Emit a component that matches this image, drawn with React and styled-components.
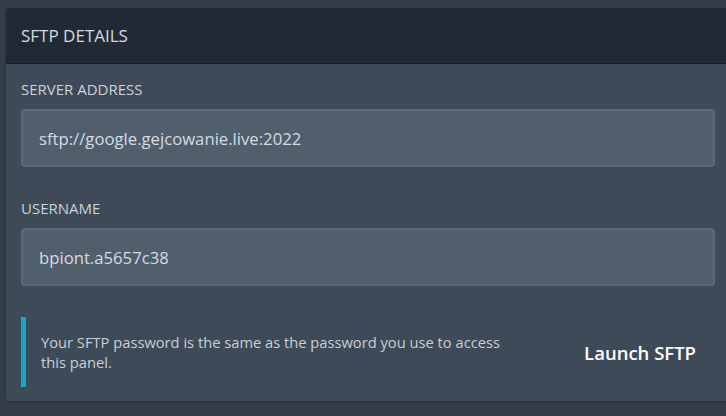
import React from 'react'
import styled, { createGlobalStyle } from 'styled-components';

const GlobalStyle = createGlobalStyle`
  body {
    margin: 0;
    background-color: #333e4a;
    font-family: "Open Sans", "Noto Sans", sans-serif;
    overflow: hidden;
  }
`

export const Page = styled.div`
  width: 726px;
  height: 416px;
  padding: 8px 0 0 6px;
  box-sizing: border-box;
  overflow: hidden;
`

export const Panel = styled.section`
  width: 740px;
  background-color: #3e4a57;
  border-radius: 4px;
  box-shadow: 0 1px 3px rgba(0, 0, 0, 0.3);
  overflow: hidden;
`

export const PanelHeader = styled.header`
  height: 55px;
  display: flex;
  align-items: center;
  padding: 0 15px;
  background-color: #212a34;
  border-bottom: 1px solid #181e25;
  color: #d2dae2;
  font-size: 17px;
  text-transform: uppercase;
`

export const PanelBody = styled.div`
  padding: 15px 15px 14px 15px;
  display: flex;
  flex-direction: column;
  gap: 31px;
`

export const Field = styled.div`
  display: flex;
  flex-direction: column;
  width: 694px;
`

export const Label = styled.label`
  color: #cbd3db;
  font-size: 15px;
  text-transform: uppercase;
  line-height: 20px;
  margin-bottom: 10px;
`

export const Input = styled.input`
  height: 58px;
  box-sizing: border-box;
  padding: 0 16px;
  background-color: #515e6b;
  border: 2px solid #5b6875;
  border-radius: 4px;
  color: #d5dce3;
  font-family: inherit;
  font-size: 16.7px;
  outline: none;
`

export const InfoRow = styled.div`
  display: flex;
  align-items: center;
  width: 694px;
`

export const Notice = styled.div`
  flex: 1;
  display: flex;
  align-items: center;
  min-height: 70px;
  padding: 0 0 0 15px;
  border-left: 5px solid #16a6c9;
  color: #c8d0d8;
  font-size: 14.7px;
  line-height: 20px;

  p {
    margin: 0;
    max-width: 475px;
  }
`

export const LaunchButton = styled.button`
  background: none;
  border: none;
  padding: 0 19px 0 30px;
  color: #ffffff;
  font-family: inherit;
  font-size: 18.5px;
  font-weight: 600;
  cursor: pointer;
`

const App = () => {
  return (
    <>
      <GlobalStyle />
      <Page>
        <Panel>
          <PanelHeader>SFTP Details</PanelHeader>
          <PanelBody>
            <Field>
              <Label htmlFor="server-address">Server Address</Label>
              <Input id="server-address" type="text" readOnly value="sftp://google.gejcowanie.live:2022" />
            </Field>
            <Field>
              <Label htmlFor="username">Username</Label>
              <Input id="username" type="text" readOnly value="bpiont.a5657c38" />
            </Field>
            <InfoRow>
              <Notice>
                <p>Your SFTP password is the same as the password you use to access this panel.</p>
              </Notice>
              <LaunchButton type="button">Launch SFTP</LaunchButton>
            </InfoRow>
          </PanelBody>
        </Panel>
      </Page>
    </>
  );
}

export default App;
